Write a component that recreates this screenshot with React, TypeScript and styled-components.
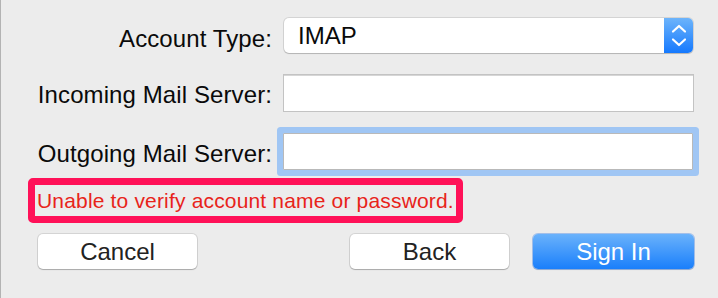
import React from "react";
import styled, { createGlobalStyle } from "styled-components";

const Global = createGlobalStyle`
  html, body { margin: 0; padding: 0; background: #ececec; }
  * { box-sizing: border-box; }
`;

const Page = styled.div`
  width: 718px;
  height: 298px;
  background: #ececec;
  border-left: 1px solid #b3b3b3;
  padding-top: 18px;
  font-family: "Liberation Sans", Arial, sans-serif;
  overflow: hidden;
`;

const Form = styled.div`
  display: grid;
  grid-template-columns: 271px 411px;
  column-gap: 11px;
  row-gap: 21px;
  align-items: center;
`;

const Label = styled.div<{ $shift?: number }>`
  text-align: right;
  font-size: 24px;
  letter-spacing: 0.1px;
  color: #0a0a0a;
  line-height: 1;
  transform: translateY(${(p) => p.$shift ?? 0}px);
`;

const Popup = styled.div`
  height: 35px;
  width: 409px;
  margin-left: 1px;
  display: flex;
  background: #fff;
  border-radius: 5px;
  box-shadow: 0 0 0 1px rgba(0, 0, 0, 0.1), 0 1px 1px rgba(0, 0, 0, 0.15);
  overflow: hidden;
`;

const PopupText = styled.div`
  flex: 1;
  display: flex;
  align-items: center;
  padding-left: 14px;
  font-size: 24px;
  color: #0a0a0a;
`;

const Stepper = styled.div`
  width: 29px;
  display: flex;
  align-items: center;
  justify-content: center;
  background: linear-gradient(#6db4fb, #1579fe);
`;

const Field = styled.div<{ $focused?: boolean }>`
  height: ${(p) => (p.$focused ? 37 : 38)}px;
  width: ${(p) => (p.$focused ? 410 : 411)}px;
  background: #fff;
  border: 1px solid ${(p) => (p.$focused ? "#b9b9b9" : "#c3c3c3")};
  box-shadow: ${(p) =>
    p.$focused ? "0 0 0 6px #a0c6f4" : "inset 0 1px 0 #d6d6d6"};
  border-radius: ${(p) => (p.$focused ? "1px" : "0")};
`;

const ErrorBox = styled.div`
  margin: 8px 0 0 27px;
  width: 435px;
  height: 45px;
  border: 7px solid #ff1158;
  border-radius: 5px;
  display: flex;
  align-items: center;
  padding-left: 2px;
  font-size: 21px;
  letter-spacing: 0.17px;
  color: #e8231a;
  white-space: nowrap;
`;

const ButtonRow = styled.div`
  display: flex;
  width: 693px;
  margin-top: 11px;
  padding-left: 37px;
  gap: 24px;
`;

const Spacer = styled.div`
  flex: 1;
`;

const Button = styled.div<{ $primary?: boolean; $w?: number }>`
  width: ${(p) => p.$w ?? 159}px;
  height: 35px;
  border-radius: 5px;
  display: flex;
  align-items: center;
  justify-content: center;
  font-size: 24px;
  color: ${(p) => (p.$primary ? "#fff" : "#222")};
  background: ${(p) =>
    p.$primary ? "linear-gradient(#6ab2fb, #1a7ffb)" : "#fff"};
  box-shadow: ${(p) =>
    p.$primary
      ? "0 0 0 1px rgba(30, 110, 230, 0.35), 0 1px 1px rgba(0,0,0,0.15)"
      : "0 0 0 1px rgba(0, 0, 0, 0.1), 0 1px 1px rgba(0, 0, 0, 0.2)"};
`;

const Chevrons = () => (
  <svg width="16" height="24" viewBox="0 0 16 24" fill="none">
    <path d="M2 7.5 L8 2 L14 7.5" stroke="#fff" strokeWidth="2.2" strokeLinecap="round" strokeLinejoin="round" />
    <path d="M2 15.5 L8 21 L14 15.5" stroke="#fff" strokeWidth="2.2" strokeLinecap="round" strokeLinejoin="round" />
  </svg>
);

export default function App() {
  return (
    <>
      <Global />
      <Page>
        <Form>
          <Label $shift={3}>Account Type:</Label>
          <Popup>
            <PopupText>IMAP</PopupText>
            <Stepper>
              <Chevrons />
            </Stepper>
          </Popup>
          <Label $shift={2}>Incoming Mail Server:</Label>
          <Field />
          <Label $shift={2}>Outgoing Mail Server:</Label>
          <Field $focused />
        </Form>
        <ErrorBox>Unable to verify account name or password.</ErrorBox>
        <ButtonRow>
          <Button>Cancel</Button>
          <Spacer />
          <Button>Back</Button>
          <Button $primary $w={161}>Sign In</Button>
        </ButtonRow>
      </Page>
    </>
  );
}
